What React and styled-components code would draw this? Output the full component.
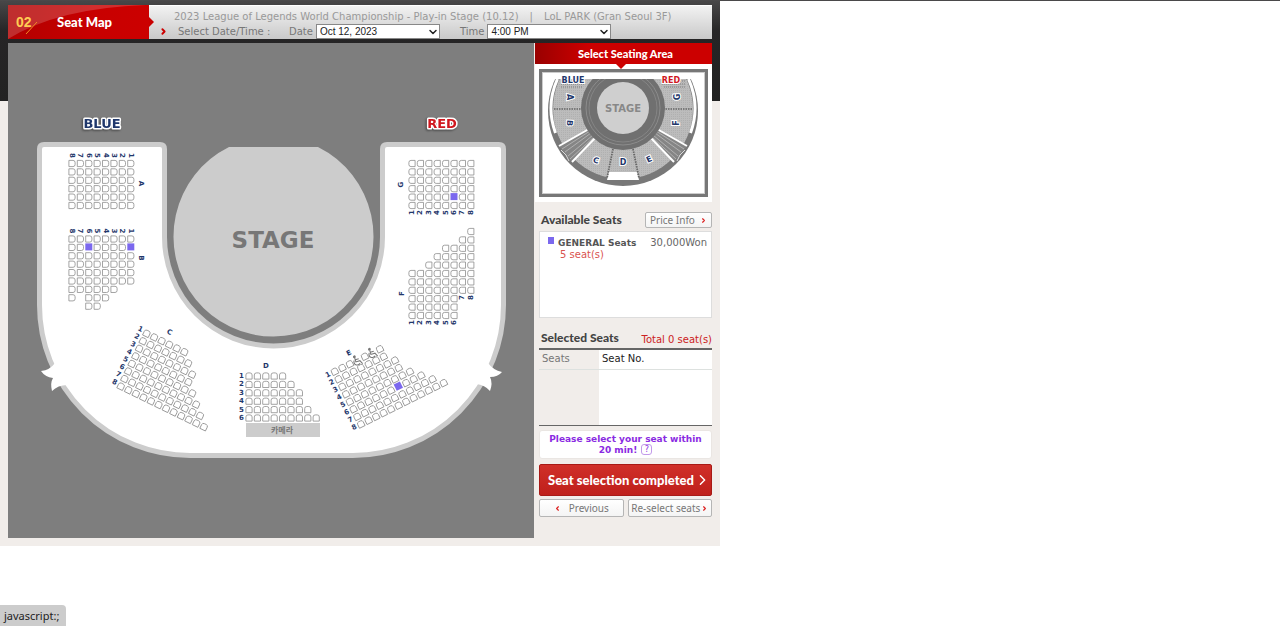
import React, { useState } from 'react';
import styled, { createGlobalStyle } from 'styled-components';
import { ChevronDown, ChevronLeft, ChevronRight } from 'lucide-react';

const NAVY = '#1f376b';
const PURPLE = '#7b68ee';
const PITCH = 8.4;

// x, y: centre of the first seat. rows: [first column, last column] for each row.
const BLOCKS = [
	{
		name: 'A', x: 72, y: 163.5, face: 90, nameAt: [69, 20],
		rows: [[0, 7], [0, 7], [0, 7], [0, 7], [0, 7], [0, 7]],
		labels: [8, 7, 6, 5, 4, 3, 2, 1].map((n, i) => [n, i * PITCH, -8]),
	},
	{
		name: 'B', x: 72, y: 239, face: 90, nameAt: [69, 19],
		rows: [[0, 7], [0, 7], [0, 7], [0, 7], [0, 7], [0, 7], [0, 5], [0, 4], [2, 3]],
		skip: ['7-1'],
		open: ['1-2', '1-7'],
		labels: [8, 7, 6, 5, 4, 3, 2, 1].map((n, i) => [n, i * PITCH, -8]),
	},
	{
		name: 'G', x: 412, y: 163.5, face: -90, nameAt: [-11, 21],
		rows: [[0, 7], [0, 7], [0, 7], [0, 7], [0, 7], [0, 7]],
		open: ['4-5'],
		labels: [1, 2, 3, 4, 5, 6, 7, 8].map((n, i) => [n, i * PITCH, 49]),
	},
	{
		name: 'F', x: 412, y: 231.5, face: -90, nameAt: [-10, 62],
		rows: [[7, 7], [6, 7], [4, 7], [3, 7], [2, 7], [0, 7], [0, 7], [0, 7], [0, 5], [0, 5], [0, 5]],
		labels: [1, 2, 3, 4, 5, 6, 7, 8].map((n, i) => [n, i * PITCH, n > 6 ? 66 : 91]),
	},
	{
		name: 'C', x: 146.7, y: 333.5, turn: 26, face: 0, nameAt: [20, -11],
		rows: [[0, 5], [0, 6], [0, 7], [0, 7], [0, 8], [0, 9], [0, 10], [0, 11]],
		labels: [1, 2, 3, 4, 5, 6, 7, 8].map((n, i) => [n, -7.5, i * PITCH - 1]),
	},
	{
		name: 'D', x: 249, y: 376, face: 0, nameAt: [17, -10],
		rows: [[0, 4], [0, 5], [0, 6], [0, 6], [0, 7], [0, 8]],
		labels: [1, 2, 3, 4, 5, 6].map((n, i) => [n, -7.5, i * PITCH]),
	},
	{
		name: 'E', x: 334.7, y: 371.5, turn: -26.5, face: 0, nameAt: [21, -10],
		rows: [[0, 6], [0, 6], [0, 7], [0, 7], [0, 8], [0, 9], [0, 10], [0, 11]],
		wheelchair: ['0-3', '0-5'],
		open: ['5-6'],
		labels: [1, 2, 3, 4, 5, 6, 7, 8].map((n, i) => [n, -7.5, i * PITCH]),
	},
];

function Wheelchair() {
	return (
		<g fill="none" stroke="#777" strokeWidth="0.9" transform="rotate(10) scale(1.2)">
			<circle cx="-1.500" cy="-3.500" r="0.700" fill="#777" />
			<path d="M-1.500 -2.500V1H2L3.500 4M-1.500 -0.800H1.500M-2.500 -0.500A2.600 2.600 0 1 0 1.500 3" />
		</g>
	);
}

function Block({ block }) {
	const { name, x, y, turn = 0, face, nameAt, rows, labels, skip = [], open = [], wheelchair = [] } = block;
	const seats = [];
	rows.forEach(([from, to], r) => {
		for (let c = from; c <= to; c++) {
			const key = `${r}-${c}`;
			if (skip.includes(key)) continue;
			seats.push(
				<g key={key} transform={`translate(${c * PITCH} ${r * PITCH})`}>
					{wheelchair.includes(key) && <Wheelchair />}
					{open.includes(key) && <rect x="-3.5" y="-4" width="7" height="7" fill={PURPLE} />}
					{!wheelchair.includes(key) && !open.includes(key) && (
						<path transform={`rotate(${face})`} d="M-3.1 3.1V-1Q-3.1 -3.1 -1 -3.1H1Q3.1 -3.1 3.1 -1V3.1Z" fill="#fff" stroke="#8d8d8d" strokeWidth="0.8" />
					)}
				</g>
			);
		}
	});
	return (
		<g transform={`translate(${x} ${y}) rotate(${turn})`}>
			{seats}
			{labels.map(([n, lx, ly]) => (
				<SeatLabel key={n} transform={`translate(${lx} ${ly}) rotate(${face})`}>{n}</SeatLabel>
			))}
			<SeatLabel transform={`translate(${nameAt[0]} ${nameAt[1]}) rotate(${face})`}>{name}</SeatLabel>
		</g>
	);
}

function SeatMap() {
	return (
		<MapSvg viewBox="8 43 526 495" role="img" aria-label="Seat map">
			<rect x="8" y="43" width="526" height="495" fill="#7e7e7e" />
			<path
				d="M44 144.5H160Q164.5 144.5 164.5 149V237A109 109 0 0 0 382.5 237V149Q382.5 144.5 387 144.5H499Q503.5 144.5 503.5 149V305A150.5 150.5 0 0 1 353 455.5H190A150.5 150.5 0 0 1 39.5 305V149Q39.5 144.5 44 144.5Z"
				fill="#fff" stroke="#ccc" strokeWidth="5"
			/>
			<path d="M55 363Q50 370 41 371Q45 377 53 378Q50 383 52 391Q58 385 67 385Z" fill="#fff" />
			<path d="M488 363Q493 370 502 372Q498 377 490 377Q493 383 490 391Q485 385 476 384Z" fill="#fff" />
			<path d="M229 147H318A100 100 0 1 1 229 147Z" fill="#ccc" />
			<StageText x="273" y="248">STAGE</StageText>
			<TeamText x="102" y="128" fill={NAVY}>BLUE</TeamText>
			<TeamText x="442" y="128" fill="#d0181f">RED</TeamText>
			{BLOCKS.map(block => <Block key={block.name} block={block} />)}
			<rect x="246" y="423" width="74" height="14" fill="#ccc" />
			<CameraText x="282" y="433">카메라</CameraText>
		</MapSvg>
	);
}

function MiniSide() {
	return (
		<g>
			<path d="M-65.5 -29A71.5 71.5 0 0 0 -67.5 25" fill="none" stroke="#fff" strokeWidth="3" />
			<path d="M-69 1H-41" stroke="#666" strokeWidth="1.4" strokeDasharray="1.5 1" />
			<path d="M-64 38L-34 21L-28 30L-51 54Z" fill="#858585" />
			<path d="M-61 41L-33 23M-58 44L-32 25M-55 48L-30 27M-53 51L-29 29" stroke="#bbb" strokeWidth="0.8" />
			<path d="M-64 38L-34 21M-51 54L-28 30" stroke="#fff" strokeWidth="2" />
			<path d="M-62 42L-57 47L-54 53" fill="none" stroke="#ddd" strokeWidth="1" />
			<path d="M-10 41L-16 70" stroke="#666" strokeWidth="1.8" strokeDasharray="1.5 1" />
			<path d="M-62 -27H-38M-62 -24H-39M-62 -21H-40" stroke="#7c7c7c" strokeWidth="1" strokeDasharray="1 1" />
		</g>
	);
}

function MiniMap() {
	return (
		<MiniSvg viewBox="0 0 161 120" role="img" aria-label="Seating areas">
			<defs>
				<clipPath id="hall"><rect y="6" width="161" height="114" /></clipPath>
				<pattern id="dots" width="2" height="2" patternUnits="userSpaceOnUse">
					<rect width="2" height="2" fill="#bcbcbc" />
					<rect width="1" height="1" fill="#b0b0b0" />
				</pattern>
			</defs>
			<g clipPath="url(#hall)">
				<g transform="translate(80 35)">
					<circle cy="3" r="75" fill="#787878" />
					<circle cy="1" r="70" fill="url(#dots)" />
					<path d="M-14 64H14L16 72H-16Z" fill="#fff" />
					<MiniSide />
					<g transform="scale(-1 1)"><MiniSide /></g>
					<circle r="42" fill="#707070" />
					<circle r="37" fill="none" stroke="#8c8c8c" />
					<circle r="34" fill="none" stroke="#858585" />
					<circle r="26" fill="#cfcfcf" />
				</g>
			</g>
			<MiniStage x="80" y="39">STAGE</MiniStage>
			<MiniText x="30" y="10" fill={NAVY}>BLUE</MiniText>
			<MiniText x="128" y="10" fill="#d0181f">RED</MiniText>
			{[['A', 27, 24, 90], ['B', 27, 50, 95], ['C', 53, 87, 15], ['D', 80, 89, 0], ['E', 106, 86, -25], ['F', 133, 50, -90], ['G', 134, 24, -90]].map(([name, x, y, turn]) => (
				<MiniText key={name} fill={NAVY} transform={`translate(${x} ${y}) rotate(${turn})`} y="3">{name}</MiniText>
			))}
		</MiniSvg>
	);
}

function DropDown({ id, label, options }) {
	const [value, setValue] = useState(options[0]);
	return (
		<Field>
			<label htmlFor={id}>{label}</label>
			<SelectBox>
				<Select id={id} value={value} onChange={e => setValue(e.target.value)}>
					{options.map(option => <option key={option}>{option}</option>)}
				</Select>
				<ChevronDown size={12} strokeWidth={3} />
			</SelectBox>
		</Field>
	);
}

function App() {
	return (
		<>
			<GlobalStyle />
			<Frame>
				<Header>
					<StepTitle>
						<Gloss viewBox="0 0 141 34" preserveAspectRatio="none" aria-hidden="true">
							<path d="M0 0H138Q50 3 0 34Z" fill="#fff" fillOpacity="0.18" />
							<path d="M18 29L29 17" stroke="#f08a24" strokeWidth="1" />
						</Gloss>
						<StepNumber>02</StepNumber>
						<StepName>Seat Map</StepName>
					</StepTitle>
					<ShowInfo>
						<ShowName>
							<span>2023 League of Legends World Championship - Play-in Stage (10.12)</span>
							<span>|</span>
							<span>LoL PARK (Gran Seoul 3F)</span>
						</ShowName>
						<DateRow>
							<ChevronRight size={9} strokeWidth={5} color="#c00" />
							<DateTitle>Select Date/Time :</DateTitle>
							<DropDown id="date" label="Date" options={['Oct 12, 2023']} />
							<DropDown id="time" label="Time" options={['4:00 PM']} />
						</DateRow>
					</ShowInfo>
				</Header>
				<Main>
					<SeatMap />
					<Side>
						<AreaPanel>
							<AreaTitle>Select Seating Area</AreaTitle>
							<MiniBox><MiniMap /></MiniBox>
						</AreaPanel>
						<SideBody>
							<SectionHead>
								<SectionTitle>Available Seats</SectionTitle>
								<PriceButton type="button">Price Info<ChevronRight size={7} strokeWidth={4} color="#d22" /></PriceButton>
							</SectionHead>
							<GradeBox>
								<Grade>
									<Swatch />
									<strong>GENERAL Seats</strong>
									<Price>30,000Won</Price>
								</Grade>
								<Remaining>5 seat(s)</Remaining>
							</GradeBox>
							<SectionHead $low>
								<SectionTitle>Selected Seats</SectionTitle>
								<Total>Total 0 seat(s)</Total>
							</SectionHead>
							<SeatTable>
								<thead>
									<tr><th>Seats</th><td>Seat No.</td></tr>
								</thead>
								<tbody>
									<tr><th /><td /></tr>
								</tbody>
							</SeatTable>
							<Notice>
								<div>Please select your seat within</div>
								<NoticeLine>20 min! <Help type="button" aria-label="Help">?</Help></NoticeLine>
							</Notice>
							<CompleteButton type="button">Seat selection completed<ChevronRight size={22} strokeWidth={2} /></CompleteButton>
							<ButtonRow>
								<SmallButton type="button"><ChevronLeft size={7} strokeWidth={4} color="#d22" />Previous</SmallButton>
								<SmallButton type="button" $tight>Re-select seats<ChevronRight size={7} strokeWidth={4} color="#d22" /></SmallButton>
							</ButtonRow>
						</SideBody>
					</Side>
				</Main>
			</Frame>
			<LinkStatus>javascript:;</LinkStatus>
		</>
	);
}

const GlobalStyle = createGlobalStyle`
	* {
		box-sizing: border-box;
	}
	body {
		margin: 0;
		border-top: 1px solid #4a494a;
		background: #fff;
		font: 10px/12px "DejaVu Sans", sans-serif;
		color: #777;
	}
	button, select {
		font: inherit;
		margin: 0;
	}
`;

const Frame = styled.div`
	width: 100%;
	max-width: 720px;
	padding: 4px 8px 8px;
	background: linear-gradient(#484748, #262526 30px, #222) 0 0 / 100% 100px no-repeat #f1edea;
`;

const Header = styled.header`
	display: flex;
	height: 34px;
	margin-bottom: 4px;
`;

const StepTitle = styled.div`
	position: relative;
	display: flex;
	align-items: center;
	width: 141px;
	padding: 0 8px;
	background: linear-gradient(100deg, #b00000, #c80000 60%, #cc0000);
	color: #fff;

	&::after {
		content: "";
		position: absolute;
		left: 100%;
		top: 12px;
		border: 5px solid transparent;
		border-left-color: #c80000;
		border-right: 0;
	}
`;

const Gloss = styled.svg`
	position: absolute;
	inset: 0;
	width: 100%;
	height: 100%;
`;

const StepNumber = styled.span`
	width: 41px;
	font: bold 14px/32px "Liberation Sans", sans-serif;
	color: #ffc32e;
`;

const StepName = styled.span`
	font: 900 13px/32px Lato, sans-serif;
`;

const ShowInfo = styled.div`
	flex: 1;
	padding-top: 5px;
	background: linear-gradient(#f2f2f2, #c9c9c9);
	border-top: 1px solid #fff;
	white-space: nowrap;
`;

const ShowName = styled.div`
	display: flex;
	gap: 11px;
	margin-bottom: 1px;
	padding-left: 25px;
	color: #999;
`;

const DateRow = styled.div`
	display: flex;
	align-items: center;
	height: 15px;
	padding-left: 10px;
`;

const DateTitle = styled.span`
	width: 121px;
	padding-left: 10px;
`;

const Field = styled.div`
	display: flex;
	align-items: center;
	gap: 3px;
	margin-right: 20px;
`;

const SelectBox = styled.span`
	position: relative;

	svg {
		position: absolute;
		right: 1px;
		top: 2px;
		color: #222;
		pointer-events: none;
	}
`;

const Select = styled.select`
	display: block;
	width: 124px;
	height: 15px;
	padding: 0 3px;
	appearance: none;
	border: 1px solid #888;
	border-radius: 0;
	background: #fff;
	color: #222;
	font: 10px/13px "Liberation Sans", sans-serif;
`;

const Main = styled.main`
	display: flex;
	align-items: flex-start;
`;

const MapSvg = styled.svg`
	display: block;
	flex: 1;
	min-width: 0;
	height: auto;
	font-family: "DejaVu Sans", sans-serif;
`;

const SeatLabel = styled.text`
	font-size: 7px;
	font-weight: bold;
	text-anchor: middle;
	dominant-baseline: central;
	fill: ${NAVY};
`;

const StageText = styled.text`
	font-size: 23px;
	font-weight: bold;
	text-anchor: middle;
	fill: #777;
`;

const TeamText = styled.text`
	font-size: 13px;
	font-weight: bold;
	text-anchor: middle;
	paint-order: stroke;
	stroke: #fff;
	stroke-width: 3px;
	stroke-linejoin: round;
	filter: drop-shadow(-1px 1px 1px #444);
`;

const CameraText = styled.text`
	font: bold 8px "Noto Sans CJK KR", sans-serif;
	text-anchor: middle;
	fill: #777;
`;

const Side = styled.aside`
	width: 178px;
	border-left: 1px solid #f1edea;
`;

const AreaPanel = styled.section`
	padding-bottom: 5px;
	background: #fff;
`;

const AreaTitle = styled.h2`
	position: relative;
	margin: 0 0 5px;
	padding-left: 4px;
	background: linear-gradient(90deg, #900, #c00 30%);
	color: #fff;
	font: 900 11px/21px Lato, sans-serif;
	text-align: center;

	&::after {
		content: "";
		position: absolute;
		left: 81px;
		top: 100%;
		border: 5px solid transparent;
		border-top-color: #c00;
		border-bottom: 0;
	}
`;

const MiniBox = styled.div`
	margin: 0 4px;
	padding: 1px;
	border: 3px solid #777;
	background: #ccc;
`;

const MiniSvg = styled.svg`
	display: block;
	width: 100%;
	background: #fff;
`;

const MiniText = styled.text`
	font-size: 8px;
	font-weight: bold;
	text-anchor: middle;
	paint-order: stroke;
	stroke: #fff;
	stroke-width: 2px;
`;

const MiniStage = styled.text`
	font-size: 10px;
	font-weight: bold;
	text-anchor: middle;
	fill: #888;
`;

const SideBody = styled.div`
	padding: 10px 0 0 4px;
`;

const SectionHead = styled.div`
	display: flex;
	justify-content: space-between;
	align-items: ${props => (props.$low ? 'flex-end' : 'center')};
	height: ${props => (props.$low ? 28 : 16)}px;
	margin-bottom: ${props => (props.$low ? 2 : 3)}px;
	white-space: nowrap;
`;

const SectionTitle = styled.h2`
	margin: 0;
	padding-left: 2px;
	font: 900 12px/16px Lato, sans-serif;
	color: #444;
`;

const OutlineButton = styled.button`
	display: flex;
	align-items: center;
	justify-content: center;
	padding: 0;
	border: 1px solid #b5b5b5;
	border-radius: 2px;
	background: linear-gradient(#fff, #f4f4f4);
	color: #777;
	font: 10px/12px "Noto Sans", sans-serif;
	white-space: nowrap;
`;

const PriceButton = styled(OutlineButton)`
	gap: 5px;
	width: 67px;
	height: 16px;
`;

const GradeBox = styled.div`
	height: 87px;
	padding: 5px 4px 0 8px;
	border: 1px solid #ddd;
	background: #fff;
`;

const Grade = styled.div`
	display: flex;
	gap: 4px;
	color: #666;
	white-space: nowrap;

	strong {
		font-size: 9px;
		color: #555;
	}
`;

const Swatch = styled.span`
	width: 6px;
	height: 7px;
	background: ${PURPLE};
`;

const Price = styled.span`
	margin-left: auto;
`;

const Remaining = styled.div`
	padding-left: 12px;
	color: #d9534f;
`;

const Total = styled.span`
	color: #c22;
`;

const SeatTable = styled.table`
	width: 100%;
	height: 78px;
	border-collapse: collapse;
	border-top: 2px solid #666;
	border-bottom: 1px solid #666;
	background: #fff;

	th, td {
		padding: 0 3px;
		text-align: left;
		font-weight: normal;
	}
	th {
		width: 60px;
		background: #f1edea;
	}
	td {
		color: #222;
	}
	thead tr {
		height: 20px;
		border-bottom: 1px solid #dde1df;
	}
`;

const Notice = styled.div`
	height: 29px;
	margin: 4px 0 5px;
	padding: 3px;
	border: 1px solid #eae6e3;
	border-radius: 3px;
	background: #fff;
	color: #8a2be2;
	font: bold 9px/10px "DejaVu Sans", sans-serif;
	text-align: center;
`;

const NoticeLine = styled.div`
	display: flex;
	align-items: center;
	justify-content: center;
	gap: 4px;
`;

const Help = styled.button`
	width: 11px;
	height: 11px;
	padding: 0;
	border: 1px solid #c39bea;
	border-radius: 3px;
	background: #fff;
	color: #8a2be2;
	font: 8px/9px "DejaVu Sans", sans-serif;
`;

const CompleteButton = styled.button`
	display: flex;
	align-items: center;
	justify-content: space-between;
	width: 100%;
	height: 32px;
	margin-bottom: 3px;
	padding: 0 0 0 8px;
	border: 1px solid #a81a16;
	border-radius: 2px;
	background: linear-gradient(#d0302a, #bf1f1a);
	color: #fff;
	font: 900 13px/30px Lato, sans-serif;
	white-space: nowrap;
`;

const ButtonRow = styled.div`
	display: flex;
	gap: 4px;
`;

const SmallButton = styled(OutlineButton)`
	flex: 1;
	gap: ${props => (props.$tight ? 1 : 8)}px;
	height: 18px;
`;

const LinkStatus = styled.div`
	position: fixed;
	left: 0;
	bottom: 0;
	padding: 4px 7px 3px 4px;
	border-radius: 0 4px 0 0;
	background: #ccc;
	color: #222;
	font: 11px/14px "Noto Sans", sans-serif;
`;

export default App;
